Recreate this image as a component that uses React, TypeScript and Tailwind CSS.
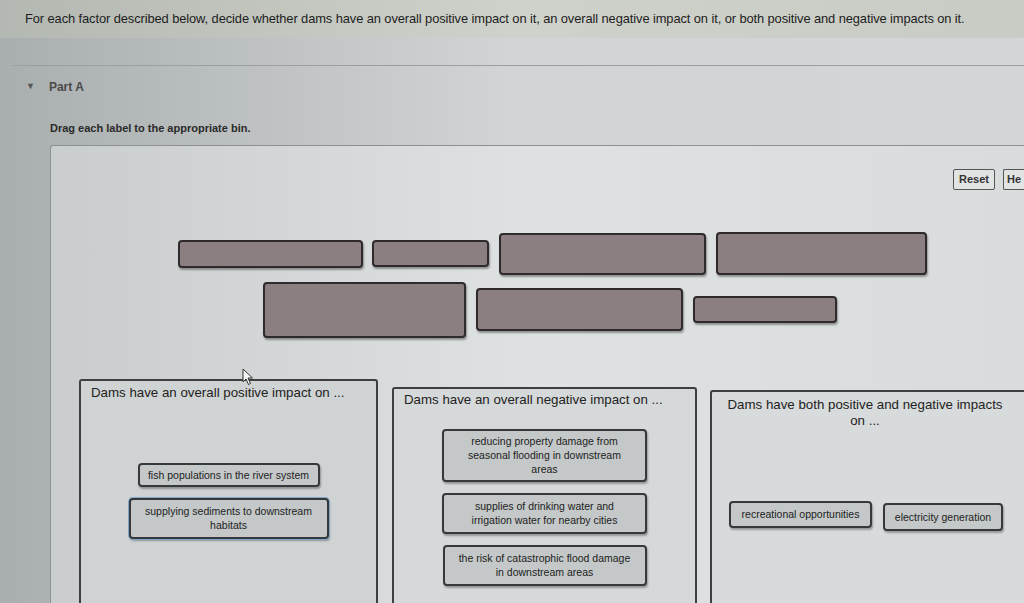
import React from 'react'

const slotClass = 'rounded-[4px] border-2 border-[#2f2a2b] bg-[#8b7f82] shadow-[1px_2px_2px_rgba(0,0,0,0.35)]'
const labelClass =
  'rounded-[4px] border-2 border-[#35393a] bg-[#c4c8c8] text-center text-[10.5px] leading-[14px] text-[#222] shadow-[1px_2px_2px_rgba(0,0,0,0.3)]'

function Cursor() {
  return (
    <svg className="absolute left-[242px] top-[368px]" width="12" height="18" viewBox="0 0 12 18">
      <path d="M1 1 L1 14 L4 11 L6.5 16.5 L8.5 15.5 L6 10 L10.5 10 Z" fill="#f4f4f4" stroke="#333" strokeWidth="1" />
    </svg>
  )
}

function App() {
  return (
    <main
      className="relative h-[603px] w-[1024px] overflow-hidden bg-linear-to-r from-[#a9aeae] via-[#d2d5d5] to-[#d3d6d6] text-[#1d1d1d]"
      style={{ fontFamily: '"Liberation Sans", Arial, sans-serif' }}
    >
      <div className="flex h-[38px] items-center bg-linear-to-r from-[#b4b8b2] via-[#cfd2ca] to-[#c9ccc4] pl-[25px] text-[12.9px] tracking-[-0.1px]">
        For each factor described below, decide whether dams have an overall positive impact on it, an overall negative impact on it, or both positive and negative impacts on it.
      </div>
      <div className="ml-[12px] h-[28px] border-b border-[#9c9f9f]" />

      <div className="flex items-center pl-[26px] pt-[12px]">
        <span className="text-[9px] text-[#555]">▼</span>
        <span className="ml-[14px] text-[12px] font-bold text-[#4a4a4a]">Part A</span>
      </div>

      <div className="pl-[50px] pt-[24px] text-[11px] font-bold text-[#2a2a2a]">Drag each label to the appropriate bin.</div>

      <section className="ml-[50px] mt-[8px] h-[460px] rounded-tl-[3px] border-l border-t border-[#8d9191] bg-linear-to-r from-[#c9cdcd] via-[#dfe2e2] to-[#d9dcdc]">
        <div className="flex justify-end gap-[8px] pt-[23px]">
          <button className="h-[21px] rounded-[2px] border border-[#555] bg-[#e2e4e4] px-[5px] text-[11px] font-bold text-[#333]">Reset</button>
          <button className="h-[21px] w-[21px] overflow-hidden whitespace-nowrap rounded-l-[2px] border border-r-0 border-[#555] bg-[#e2e4e4] pl-[3px] text-left text-[11px] font-bold text-[#333]">
            He
          </button>
        </div>

        <div className="ml-[127px] mt-[41px] flex h-[46px] items-center">
          <div className={`${slotClass} h-[28px] w-[185px] shrink-0`} />
          <div className={`${slotClass} ml-[9px] h-[27px] w-[117px] shrink-0`} />
          <div className={`${slotClass} ml-[10px] h-[42px] w-[207px] shrink-0`} />
          <div className={`${slotClass} ml-[10px] h-[43px] w-[211px] shrink-0`} />
        </div>
        <div className="ml-[212px] mt-[5px] flex h-[56px] items-center">
          <div className={`${slotClass} h-[56px] w-[203px] shrink-0`} />
          <div className={`${slotClass} ml-[10px] h-[43px] w-[207px] shrink-0`} />
          <div className={`${slotClass} ml-[10px] h-[27px] w-[144px] shrink-0`} />
        </div>

        <div className="ml-[28px] mt-[41px] flex items-start">
          <div className="h-[240px] w-[299px] shrink-0 rounded-t-[3px] border-2 border-b-0 border-[#3c4040] bg-[#d0d3d3]">
            <div className="pl-[10px] pt-[4px] text-[13.3px] leading-[16px] text-[#222]">Dams have an overall positive impact on ...</div>
            <div className="mt-[62px] flex flex-col items-center gap-[11px]">
              <div className={`${labelClass} flex h-[24px] w-[182px] items-center justify-center whitespace-nowrap`}>fish populations in the river system</div>
              <div className={`${labelClass} flex h-[41px] w-[200px] items-start justify-center px-[8px] pt-[4px] ring-1 ring-[#7fa6c9]`}>
                supplying sediments to downstream habitats
              </div>
            </div>
          </div>

          <div className="ml-[14px] mt-[8px] h-[232px] w-[305px] shrink-0 rounded-t-[3px] border-2 border-b-0 border-[#3c4040] bg-[#d6d9d9]">
            <div className="pl-[10px] pt-[3px] text-[13.3px] leading-[16px] text-[#222]">Dams have an overall negative impact on ...</div>
            <div className="mt-[21px] flex flex-col items-center gap-[11px]">
              <div className={`${labelClass} flex h-[53px] w-[205px] items-center justify-center px-[16px]`}>
                reducing property damage from seasonal flooding in downstream areas
              </div>
              <div className={`${labelClass} flex h-[41px] w-[205px] items-center justify-center px-[16px]`}>
                supplies of drinking water and irrigation water for nearby cities
              </div>
              <div className={`${labelClass} flex h-[41px] w-[204px] items-center justify-center px-[10px]`}>
                the risk of catastrophic flood damage in downstream areas
              </div>
            </div>
          </div>

          <div className="ml-[13px] mt-[11px] h-[229px] w-[330px] shrink-0 rounded-tl-[3px] border-2 border-b-0 border-r-0 border-[#3c4040] bg-[#d8dbdb]">
            <div className="w-[306px] px-[10px] pt-[5px] text-center text-[13.3px] leading-[16px] text-[#222]">
              Dams have both positive and negative impacts on ...
            </div>
            <div className="ml-[17px] mt-[72px] flex items-start gap-[11px]">
              <div className={`${labelClass} flex h-[27px] w-[143px] items-center justify-center whitespace-nowrap px-[2px]`}>recreational opportunities</div>
              <div className={`${labelClass} mt-[2px] flex h-[28px] w-[120px] items-center justify-center whitespace-nowrap px-[2px]`}>electricity generation</div>
            </div>
          </div>
        </div>
      </section>

      <Cursor />
    </main>
  )
}

export default App
